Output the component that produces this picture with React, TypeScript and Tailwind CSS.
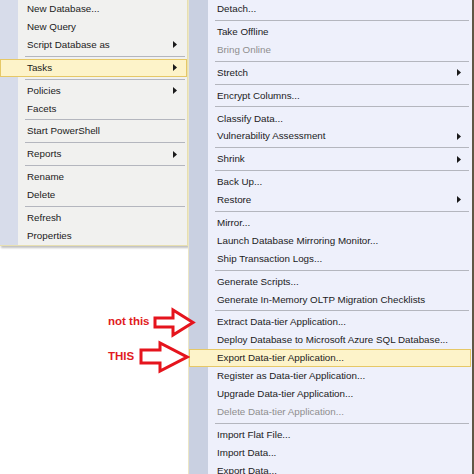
import React from 'react';

type Item = { label: string; sub?: boolean; disabled?: boolean; active?: boolean } | 'sep';

const leftItems: Item[] = [
  { label: 'New Database...' },
  { label: 'New Query' },
  { label: 'Script Database as', sub: true },
  'sep',
  { label: 'Tasks', sub: true, active: true },
  'sep',
  { label: 'Policies', sub: true },
  { label: 'Facets' },
  'sep',
  { label: 'Start PowerShell' },
  'sep',
  { label: 'Reports', sub: true },
  'sep',
  { label: 'Rename' },
  { label: 'Delete' },
  'sep',
  { label: 'Refresh' },
  { label: 'Properties' },
];

const rightItems: Item[] = [
  { label: 'Detach...' },
  'sep',
  { label: 'Take Offline' },
  { label: 'Bring Online', disabled: true },
  'sep',
  { label: 'Stretch', sub: true },
  'sep',
  { label: 'Encrypt Columns...' },
  'sep',
  { label: 'Classify Data...' },
  { label: 'Vulnerability Assessment', sub: true },
  'sep',
  { label: 'Shrink', sub: true },
  'sep',
  { label: 'Back Up...' },
  { label: 'Restore', sub: true },
  'sep',
  { label: 'Mirror...' },
  { label: 'Launch Database Mirroring Monitor...' },
  { label: 'Ship Transaction Logs...' },
  'sep',
  { label: 'Generate Scripts...' },
  { label: 'Generate In-Memory OLTP Migration Checklists' },
  'sep',
  { label: 'Extract Data-tier Application...' },
  { label: 'Deploy Database to Microsoft Azure SQL Database...' },
  { label: 'Export Data-tier Application...', active: true },
  { label: 'Register as Data-tier Application...' },
  { label: 'Upgrade Data-tier Application...' },
  { label: 'Delete Data-tier Application...', disabled: true },
  'sep',
  { label: 'Import Flat File...' },
  { label: 'Import Data...' },
  { label: 'Export Data...' },
];

const SubArrow = () => (
  <svg width="4" height="7" viewBox="0 0 4 7" className="shrink-0">
    <path d="M0 0 L4 3.5 L0 7 Z" fill="#1a1a1a" />
  </svg>
);

const MenuList: React.FC<{ items: Item[]; textPad: string; sepPad: string }> = ({ items, textPad, sepPad }) => (
  <div className="flex flex-col">
    {items.map((it, i) => {
      if (it === 'sep') {
        return (
          <div key={i} className={`h-[5px] flex flex-col justify-center ${sepPad}`}>
            <div className="h-px bg-[#b4b6be]" />
          </div>
        );
      }
      return (
        <div
          key={i}
          className={`h-[17.9px] flex items-center pr-[10px] ${textPad} ${
            it.active ? 'bg-[#fdf3c9] outline outline-1 -outline-offset-1 outline-[#e6c866]' : ''
          }`}
        >
          <span className={`flex-1 whitespace-nowrap ${it.disabled ? 'text-[#8e8e8e]' : 'text-[#1b1b1b]'}`}>
            {it.label}
          </span>
          {it.sub && <SubArrow />}
        </div>
      );
    })}
  </div>
);

const App: React.FC = () => {
  return (
    <div
      className="relative w-[474px] h-[474px] overflow-hidden bg-white flex text-[9.8px] leading-none"
      style={{ fontFamily: '"Segoe UI", "Liberation Sans", Arial, sans-serif' }}
    >
      {/* Parent context menu */}
      <div className="w-[188px] shrink-0 flex flex-col">
        <div className="relative bg-[#f1f1ef] border-r border-b border-[#e7dfb0] shadow-[1px_2px_2px_rgba(0,0,0,0.25)]">
          <div className="absolute left-0 top-0 bottom-0 w-[18px] bg-[#d7dcea]" />
          <div className="relative">
            <MenuList items={leftItems} textPad="pl-[27px]" sepPad="pl-[25px] pr-[2px]" />
          </div>
        </div>
      </div>

      {/* Tasks submenu */}
      <div className="relative flex-1 bg-[#eef0fb] border-l border-[#ece6c4] border-r-2 border-r-[#5f5846]">
        <div className="absolute left-0 top-0 bottom-0 w-[19px] bg-[#c9d0e1]" />
        <div className="relative pr-[1px]">
          <MenuList items={rightItems} textPad="pl-[28px]" sepPad="pl-[26px] pr-[2px]" />
        </div>
      </div>

      {/* Annotations */}
      <span className="absolute left-[108px] top-[316px] text-[11.5px] font-bold text-[#e11a22] leading-none">
        not this
      </span>
      <svg className="absolute left-[150px] top-[306px]" width="46" height="34" viewBox="0 0 46 34">
        <path d="M5 12 L23 12 L23 4 L43 16.5 L23 29 L23 21 L5 21 Z" fill="#fff" stroke="#e5141d" strokeWidth="3" />
      </svg>
      <span className="absolute left-[108px] top-[351px] text-[11.5px] font-bold text-[#e11a22] leading-none">
        THIS
      </span>
      <svg className="absolute left-[136px] top-[338px]" width="54" height="38" viewBox="0 0 54 38">
        <path d="M5 12 L24 12 L24 5 L51 19 L24 33 L24 25 L5 25 Z" fill="#fff" stroke="#e5141d" strokeWidth="3" />
      </svg>
    </div>
  );
};

export default App;
